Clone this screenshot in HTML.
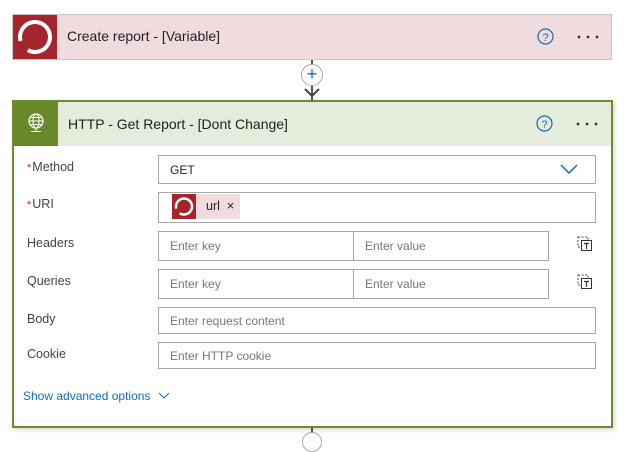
<!DOCTYPE html>
<html><head><style>
*{box-sizing:border-box;margin:0;padding:0}
body{width:624px;height:437px;background:#fff;font-family:"Segoe UI","Liberation Sans",sans-serif;font-size:13px;color:#333;position:relative;overflow:hidden}
.abs{position:absolute}
.inp{position:absolute;border:1px solid #a6a6a6;background:#fff;font-size:12px;color:#777;padding-left:11px;display:flex;align-items:center}
.lbl{position:absolute;left:27px;font-size:12.5px;color:#444}
.req{color:#e81123;font-size:11px;margin-right:1px}
</style></head><body>
<!-- top card -->
<div class="abs" style="left:12px;top:14px;width:600px;height:46px;background:#f0dcdf;border:1px solid #c8c6c6"></div>
<div class="abs" style="left:13px;top:15px;width:44px;height:44px;background:#a4262c"></div>
<svg class="abs" style="left:13px;top:15px" width="44" height="44"><circle cx="22" cy="22" r="15" fill="none" stroke="#fff" stroke-width="4" stroke-dasharray="82 12" transform="rotate(165 22 22)"/></svg>
<div class="abs" style="left:67px;top:28px;font-size:14px;color:#222">Create report - [Variable]</div>
<svg class="abs" style="left:537px;top:28px" width="17" height="17"><circle cx="8.5" cy="8.5" r="7.5" fill="none" stroke="#0f6cbd" stroke-width="1.2"/><text x="8.5" y="13" font-size="11" text-anchor="middle" fill="#0f6cbd" font-family="Liberation Sans">?</text></svg>
<svg class="abs" style="left:576px;top:34px" width="26" height="6"><circle cx="3" cy="3" r="1.4" fill="#333"/><circle cx="12" cy="3" r="1.4" fill="#333"/><circle cx="21" cy="3" r="1.4" fill="#333"/></svg>
<!-- connector -->
<div class="abs" style="left:311px;top:60px;width:2px;height:40px;background:#555"></div>
<div class="abs" style="left:301px;top:64px;width:22px;height:22px;border-radius:50%;background:#fff;border:1px solid #aaa;color:#0f6cbd;font-size:18px;line-height:19px;text-align:center">+</div>
<svg class="abs" style="left:304px;top:87px" width="16" height="12"><path d="M1 2 L8 9 L15 2" fill="none" stroke="#444" stroke-width="2"/></svg>
<div class="abs" style="left:311px;top:428px;width:2px;height:9px;background:#555"></div>
<div class="abs" style="left:302px;top:432px;width:20px;height:20px;border-radius:50%;border:1px solid #aaa;background:#fff"></div>
<!-- main card -->
<div class="abs" style="left:12px;top:100px;width:601px;height:328px;border:2px solid #6b8e2b;background:#fff;box-shadow:2px 2px 4px rgba(0,0,0,.15)"></div>
<div class="abs" style="left:14px;top:102px;width:597px;height:44px;background:#e5ecdc"></div>
<div class="abs" style="left:14px;top:102px;width:44px;height:44px;background:#68882a"></div>
<svg class="abs" style="left:26px;top:112px" width="20" height="22"><circle cx="10" cy="9" r="7" fill="none" stroke="#fff" stroke-width="1.3"/><ellipse cx="10" cy="9" rx="3" ry="7" fill="none" stroke="#fff" stroke-width="1.1"/><path d="M3 9H17M4 5.5H16M4 12.5H16M10 16V19M5 19.5H15" stroke="#fff" stroke-width="1.1"/></svg>
<div class="abs" style="left:68px;top:116px;font-size:14px;color:#222">HTTP - Get Report - [Dont Change]</div>
<svg class="abs" style="left:536px;top:115px" width="17" height="17"><circle cx="8.5" cy="8.5" r="7.5" fill="none" stroke="#0f6cbd" stroke-width="1.2"/><text x="8.5" y="13" font-size="11" text-anchor="middle" fill="#0f6cbd" font-family="Liberation Sans">?</text></svg>
<svg class="abs" style="left:575px;top:121px" width="26" height="6"><circle cx="3" cy="3" r="1.4" fill="#333"/><circle cx="12" cy="3" r="1.4" fill="#333"/><circle cx="21" cy="3" r="1.4" fill="#333"/></svg>
<!-- fields -->
<div class="lbl" style="top:160px"><span class="req">*</span>Method</div>
<div class="inp" style="left:158px;top:155px;width:438px;height:29px;color:#222">GET</div>
<svg class="abs" style="left:560px;top:164px" width="18" height="11"><path d="M1 1 L9 9 L17 1" fill="none" stroke="#0f6cbd" stroke-width="1.5"/></svg>
<div class="lbl" style="top:197px"><span class="req">*</span>URI</div>
<div class="inp" style="left:158px;top:192px;width:438px;height:31px"></div>
<div class="abs" style="left:172px;top:194px;width:68px;height:25px;background:#f0dcdf"></div>
<div class="abs" style="left:172px;top:194px;width:24px;height:25px;background:#a4262c"></div>
<svg class="abs" style="left:172px;top:194px" width="24" height="25"><circle cx="12" cy="12.5" r="8" fill="none" stroke="#fff" stroke-width="2.5" stroke-dasharray="44 6" transform="rotate(165 12 12.5)"/></svg>
<div class="abs" style="left:206px;top:199px;font-size:12.5px;color:#222">url&nbsp;&nbsp;×</div>
<div class="lbl" style="top:236px">Headers</div>
<div class="inp" style="left:158px;top:231px;width:196px;height:30px">Enter key</div>
<div class="inp" style="left:353px;top:231px;width:196px;height:30px">Enter value</div>
<div class="lbl" style="top:274px">Queries</div>
<div class="inp" style="left:158px;top:269px;width:196px;height:30px">Enter key</div>
<div class="inp" style="left:353px;top:269px;width:196px;height:30px">Enter value</div>
<svg class="abs" style="left:577px;top:236px" width="16" height="16"><rect x="1" y="1" width="10" height="10" fill="none" stroke="#444" stroke-dasharray="2 1.5"/><rect x="4.5" y="4.5" width="10" height="10" fill="#fff" stroke="#333"/><path d="M7 7.5H12M9.5 7.5V13" stroke="#333" stroke-width="1.2"/></svg>
<svg class="abs" style="left:577px;top:274px" width="16" height="16"><rect x="1" y="1" width="10" height="10" fill="none" stroke="#444" stroke-dasharray="2 1.5"/><rect x="4.5" y="4.5" width="10" height="10" fill="#fff" stroke="#333"/><path d="M7 7.5H12M9.5 7.5V13" stroke="#333" stroke-width="1.2"/></svg>
<div class="lbl" style="top:312px">Body</div>
<div class="inp" style="left:158px;top:307px;width:438px;height:27px">Enter request content</div>
<div class="lbl" style="top:347px">Cookie</div>
<div class="inp" style="left:158px;top:342px;width:438px;height:27px">Enter HTTP cookie</div>
<div class="abs" style="left:23px;top:389px;font-size:12px;color:#0f6cbd">Show advanced options</div>
<svg class="abs" style="left:158px;top:392px" width="12" height="8"><path d="M1 1 L6 6 L11 1" fill="none" stroke="#0f6cbd" stroke-width="1"/></svg>
</body></html>
